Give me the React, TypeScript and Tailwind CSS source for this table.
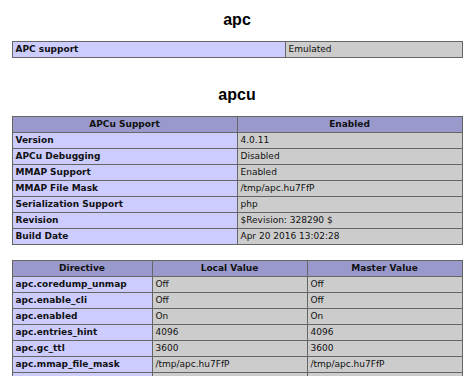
import React from 'react';

// One row of a phpinfo style module table
interface Row {
    label: string;
    values: string[];
}

interface ModuleTableProps {
    head?: string[];
    rows: Row[];
    cols: string;
    className?: string;
}

const cell = "h-[16px] px-[3px] border-r border-b border-[#666] leading-[15px] whitespace-nowrap overflow-hidden";

const ModuleTable: React.FC<ModuleTableProps> = ({ head, rows, cols, className }) => {
    return (
        <div className={`mx-auto w-[451px] border-t border-l border-[#666] grid text-[9px] text-[#111] ${cols} ${className ?? ''}`}>
            {head && head.map((h, i) => (
                <div key={'h' + i} className={`${cell} bg-[#9999cc] font-bold text-center`}>{h}</div>
            ))}
            {rows.map((row, index) => (
                <React.Fragment key={index}>
                    <div className={`${cell} bg-[#ccccff] font-bold`}>{row.label}</div>
                    {row.values.map((v, j) => (
                        <div key={j} className={`${cell} bg-[#cccccc]`}>{v}</div>
                    ))}
                </React.Fragment>
            ))}
        </div>
    );
};

const apcuRows: Row[] = [
    { label: 'Version', values: ['4.0.11'] },
    { label: 'APCu Debugging', values: ['Disabled'] },
    { label: 'MMAP Support', values: ['Enabled'] },
    { label: 'MMAP File Mask', values: ['/tmp/apc.hu7FfP'] },
    { label: 'Serialization Support', values: ['php'] },
    { label: 'Revision', values: ['$Revision: 328290 $'] },
    { label: 'Build Date', values: ['Apr 20 2016 13:02:28'] },
];

// last row only peeks in at the bottom edge, so it stays blank
const directives: Row[] = [
    { label: 'apc.coredump_unmap', values: ['Off', 'Off'] },
    { label: 'apc.enable_cli', values: ['Off', 'Off'] },
    { label: 'apc.enabled', values: ['On', 'On'] },
    { label: 'apc.entries_hint', values: ['4096', '4096'] },
    { label: 'apc.gc_ttl', values: ['3600', '3600'] },
    { label: 'apc.mmap_file_mask', values: ['/tmp/apc.hu7FfP', '/tmp/apc.hu7FfP'] },
    { label: '', values: ['', ''] },
];

const App: React.FC = () => {
    return (
        <div className="w-[474px] h-[376px] overflow-hidden bg-white font-['DejaVu_Sans',sans-serif]">
            <h2 className="mt-[9px] h-[22px] leading-[22px] text-center text-[16px] font-bold text-black font-['Liberation_Sans',sans-serif]">apc</h2>
            <ModuleTable
                className="mt-[10px]"
                cols="grid-cols-[273px_1fr]"
                rows={[{ label: 'APC support', values: ['Emulated'] }]}
            />
            <h2 className="mt-[26px] h-[22px] leading-[22px] text-center text-[16px] font-bold text-black font-['Liberation_Sans',sans-serif]">apcu</h2>
            <ModuleTable
                className="mt-[10px]"
                cols="grid-cols-[225px_1fr]"
                head={['APCu Support', 'Enabled']}
                rows={apcuRows}
            />
            <ModuleTable
                className="mt-[15px]"
                cols="grid-cols-[140px_155px_1fr]"
                head={['Directive', 'Local Value', 'Master Value']}
                rows={directives}
            />
        </div>
    );
};

export default App;
